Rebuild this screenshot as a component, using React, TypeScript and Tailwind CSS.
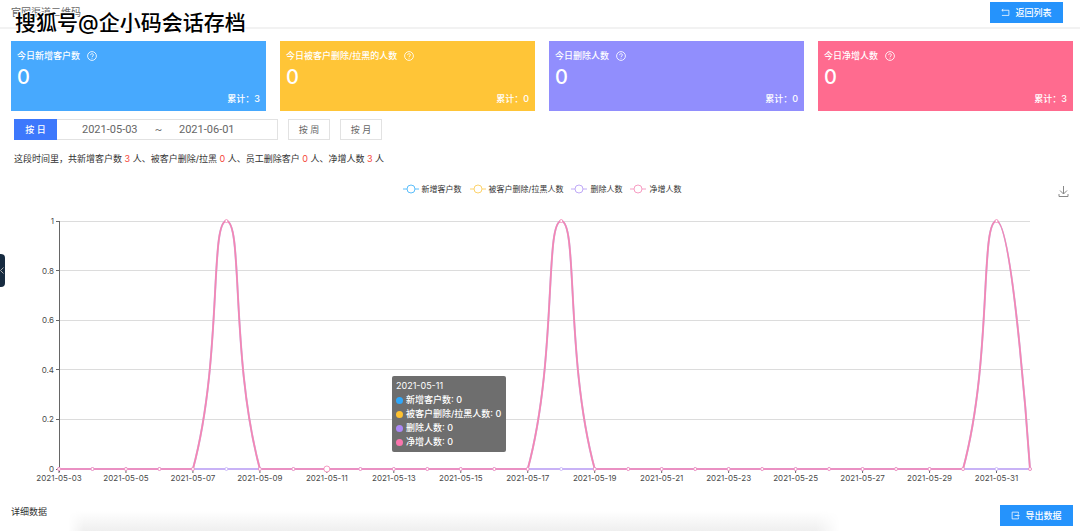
import React from "react";

const LEFT = 59;
const RIGHT = 1030;
const TOP = 16;
const BASE = 264;
const COUNT = 30;
const STEP = (RIGHT - LEFT) / (COUNT - 1);
const SMOOTH = 0.5;

const gains = Array.from({ length: COUNT }, (_, i) => ([5, 15, 28].includes(i) ? 1 : 0));
const zeros = gains.map(() => 0);
const px = (i: number) => LEFT + i * STEP;
const py = (v: number) => BASE - v * (BASE - TOP);
const rowY = (v: number) => Math.floor(py(v)) + 0.5;

const dateAt = (i: number) => {
  const d = new Date(Date.UTC(2021, 4, 3 + i));
  return d.toISOString().slice(0, 10);
};

function smoothPath(values: number[]) {
  const pts = values.map((v, i) => [px(i), py(v)]);
  const clamp = (v: number, a: number, b: number) => Math.max(Math.min(a, b), Math.min(Math.max(a, b), v));
  let d = `M${pts[0][0]} ${pts[0][1]}`;
  const control = (i: number, dir: 1 | -1) => {
    const p = pts[i];
    const prev = pts[i - 1];
    const next = pts[i + 1];
    if (!prev || !next) return p;
    const a = Math.hypot(p[0] - prev[0], p[1] - prev[1]);
    const b = Math.hypot(next[0] - p[0], next[1] - p[1]);
    const ratio = (dir === 1 ? b : a) / (a + b);
    const other = dir === 1 ? next : prev;
    return [0, 1].map((k) => clamp(p[k] + dir * (next[k] - prev[k]) * SMOOTH * ratio, p[k], other[k]));
  };
  for (let i = 0; i < pts.length - 1; i++) {
    const c1 = control(i, 1);
    const c2 = control(i + 1, -1);
    d += `C${c1[0]} ${c1[1]} ${c2[0]} ${c2[1]} ${pts[i + 1][0]} ${pts[i + 1][1]}`;
  }
  return d;
}

const cards = [
  { title: "今日新增客户数", total: 3, tone: "bg-[#47a9fe]" },
  { title: "今日被客户删除/拉黑的人数", total: 0, tone: "bg-[#ffc537]" },
  { title: "今日删除人数", total: 0, tone: "bg-[#918efd]" },
  { title: "今日净增人数", total: 3, tone: "bg-[#ff6b8f]" },
];

const series = [
  { name: "新增客户数", stroke: "stroke-[#5cbefa]", dot: "bg-[#2fa8fb]" },
  { name: "被客户删除/拉黑人数", stroke: "stroke-[#fdd36c]", dot: "bg-[#ffc22f]" },
  { name: "删除人数", stroke: "stroke-[#c0aaf7]", dot: "bg-[#ab87f7]" },
  { name: "净增人数", stroke: "stroke-[#f79dc3]", dot: "bg-[#fb75ad]" },
];

function HelpIcon() {
  return (
    <svg viewBox="0 0 20 20" className="size-[10px]" fill="none" stroke="currentColor" strokeWidth="1.7" aria-hidden="true">
      <circle cx="10" cy="10" r="8.8" />
      <path d="M7.2 8.2C7.2 4.4 12.9 4.6 12.9 7.9C12.9 10 10 9.8 10 12.2M10 13.7V15.3" />
    </svg>
  );
}

function ReturnIcon() {
  return (
    <svg viewBox="0 0 20 20" className="size-[9px]" fill="none" stroke="currentColor" strokeWidth="1.7" aria-hidden="true">
      <path d="M2 5H17.5V16.5H2M5 2L2 5L5 8" />
    </svg>
  );
}

function ExportIcon() {
  return (
    <svg viewBox="0 0 20 20" className="size-[9px]" fill="none" stroke="currentColor" strokeWidth="1.7" aria-hidden="true">
      <path d="M16.5 6V2.5H2.5V17.5H16.5V14M8 10H18M15 7L18 10L15 13" />
    </svg>
  );
}

function Chart() {
  const gainPath = smoothPath(gains);
  return (
    <svg viewBox="0 0 1080 288" className="block h-auto w-full font-[Inter,sans-serif] text-[8px]" role="img" aria-label="客户数趋势">
      {[0.2, 0.4, 0.6, 0.8, 1].map((v) => (
        <line key={v} x1={LEFT} x2={RIGHT} y1={rowY(v)} y2={rowY(v)} stroke="#dcdcdc" />
      ))}
      <g stroke="#666">
        <line x1={LEFT + 0.5} x2={LEFT + 0.5} y1={TOP} y2={BASE + 3} />
        {[0, 0.2, 0.4, 0.6, 0.8, 1].map((v) => (
          <line key={v} x1={LEFT - 3} x2={LEFT} y1={rowY(v)} y2={rowY(v)} />
        ))}
        {gains.map((_, i) => (i % 2 === 0 ? <line key={i} x1={px(i)} x2={px(i)} y1={BASE} y2={BASE + 4} /> : null))}
      </g>
      <g fill="#4a4a4a">
        {[0, 0.2, 0.4, 0.6, 0.8, 1].map((v) => (
          <text key={v} x={LEFT - 5} y={py(v) + 3} textAnchor="end">{v}</text>
        ))}
        {gains.map((_, i) =>
          i % 2 === 0 ? <text key={i} x={px(i)} y={BASE + 12} textAnchor="middle">{dateAt(i)}</text> : null
        )}
      </g>
      <g fill="none">
        <path d={gainPath} stroke="#c3bde8" strokeWidth="2" />
        <path d={smoothPath(zeros)} stroke="#c8b2f6" strokeWidth="2" />
        <path d={gainPath} stroke="#f585b3" strokeWidth="1.7" />
      </g>
      <g fill="#fff" strokeWidth="0.8">
        {zeros.map((v, i) => <circle key={i} cx={px(i)} cy={py(v)} r="1.5" stroke="#c3aef7" />)}
        {gains.map((v, i) => <circle key={i} cx={px(i)} cy={py(v)} r={i === 8 ? 3 : 1.5} stroke="#f283b2" />)}
      </g>
    </svg>
  );
}

export default function App() {
  return (
    <div className="relative h-screen overflow-hidden bg-white font-[Inter,'Noto_Sans_CJK_SC',sans-serif] text-[9px] leading-[14px] text-[#333]">
      <div className="absolute right-[240px] bottom-0 left-[68px] h-[20px] bg-linear-to-b from-white to-[#efefef] [mask-image:linear-gradient(to_right,transparent,black_16px,black_calc(100%-24px),transparent)]" />
      <header className="flex h-[29px] items-start justify-between border-b-2 border-[#f2f2f2] pr-[17px] pl-[11px]">
        <h1 className="pt-[5px] text-[10px] text-[#666]">官网渠道二维码</h1>
        <button className="mt-[2px] flex h-[21px] w-[73px] items-center justify-center gap-[5px] bg-[#2593fc] font-medium text-white">
          <ReturnIcon />返回列表
        </button>
      </header>
      <p className="absolute top-[9px] left-[15px] text-[21px] leading-[28px] font-medium whitespace-nowrap text-black [paint-order:stroke_fill] [-webkit-text-stroke:2px_white]">
        搜狐号@企小码会话存档
      </p>

      <main className="relative">
        <section className="grid grid-cols-4 gap-[14px] pt-[12px] pr-[7px] pl-[11px]">
          {cards.map((c) => (
            <article key={c.title} className={`flex h-[70px] flex-col px-[6px] pt-[8px] font-medium text-white ${c.tone}`}>
              <h2 className="flex items-center gap-[7px]">{c.title}<HelpIcon /></h2>
              <strong className="text-[20px] leading-[29px] font-medium">0</strong>
              <span className="text-right">累计：{c.total}</span>
            </article>
          ))}
        </section>

        <div className="flex h-[37px] items-center pl-[14px] text-[#666]">
          <button className="h-[21px] w-[43px] bg-[#3d78fc] font-medium text-white">按 日</button>
          <div className="flex h-[21px] w-[221px] items-center border border-l-0 border-[#e2e2e2] pl-[18px] font-[Roboto,sans-serif] text-[11px]">
            <input aria-label="开始日期" defaultValue="2021-05-03" className="w-[70px] px-[7px] outline-none" />
            <span className="w-[27px] text-center">~</span>
            <input aria-label="结束日期" defaultValue="2021-06-01" className="w-[70px] px-[7px] outline-none" />
          </div>
          <button className="ml-[10px] h-[21px] w-[42px] border border-[#e2e2e2]">按 周</button>
          <button className="ml-[10px] h-[21px] w-[42px] border border-[#e2e2e2]">按 月</button>
        </div>
        <p className="pt-[4px] pl-[14px]">
          这段时间里，共新增客户数 <b className="font-normal text-[#f5483b]">3</b> 人、被客户删除/拉黑 <b className="font-normal text-[#f5483b]">0</b> 人、员工删除客户 <b className="font-normal text-[#f5483b]">0</b> 人、净增人数 <b className="font-normal text-[#f5483b]">3</b> 人
        </p>

        <section className="relative pt-[16px]">
          <ul className="flex h-[14px] items-center justify-center gap-[8px] pl-[4px] text-[8px]">
            {series.map((s) => (
              <li key={s.name} className="flex items-center gap-[3px]">
                <svg viewBox="0 0 16 10" className={`h-[10px] w-[16px] fill-white ${s.stroke}`} aria-hidden="true">
                  <path d="M0 5H16" />
                  <circle cx="8" cy="5" r="4" />
                </svg>
                {s.name}
              </li>
            ))}
          </ul>
          <button aria-label="下载" className="absolute top-[20px] right-[11px] text-[#888]">
            <svg viewBox="0 0 11 11" className="size-[11px]" fill="none" stroke="currentColor" aria-hidden="true">
              <path d="M5.5 0V8M2 4.5L5.5 8L9 4.5M1 8V10.5H10V8" />
            </svg>
          </button>
          <div className="pt-[9px]"><Chart /></div>
          <div className="absolute top-[210px] left-[392px] rounded-[2px] bg-[#6e6e6e] py-[3px] pr-[5px] pl-[4px] whitespace-nowrap text-white">
            <p>2021-05-11</p>
            {series.map((s) => (
              <p key={s.name} className="flex items-center gap-[3px] font-medium">
                <span className={`size-[7px] rounded-full ${s.dot}`} />{s.name}: 0
              </p>
            ))}
          </div>
        </section>

        <div className="flex items-start justify-between pt-[12px] pr-[7px] pl-[11px]">
          <h2>详细数据</h2>
          <button className="flex h-[21px] w-[73px] items-center justify-center gap-[5px] bg-[#2593fc] font-medium text-white">
            <ExportIcon />导出数据
          </button>
        </div>
      </main>

      <button aria-label="收起" className="absolute top-[254px] left-0 h-[33px] w-[5px] overflow-hidden rounded-r-[4px] bg-[#172b40] text-[#aaa]">
        <svg viewBox="0 0 5 33" className="h-[33px] w-[5px]" fill="none" stroke="currentColor" aria-hidden="true">
          <path d="M3.5 13.5L0.5 16.5L3.5 19.5" />
        </svg>
      </button>
    </div>
  );
}
